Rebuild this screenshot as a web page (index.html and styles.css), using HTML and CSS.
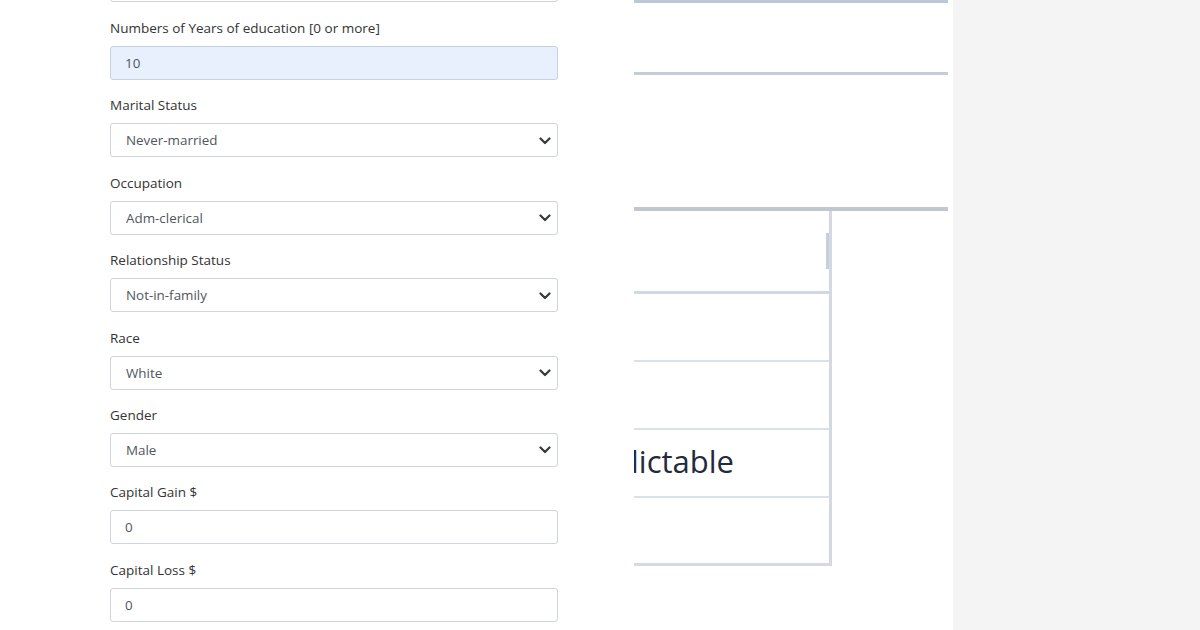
FILE: index.html
```html
<!DOCTYPE html>
<html lang="en">
<head>
<meta charset="utf-8">
<title>Income prediction form</title>
<link rel="stylesheet" href="styles.css">
</head>
<body>
<div class="page">
  <div class="form-col">
    <div class="form">
      <div class="control partial"></div>

      <div class="field">
        <label class="label">Numbers of Years of education [0 or more]</label>
        <div class="control filled">10</div>
      </div>

      <div class="field">
        <label class="label">Marital Status</label>
        <div class="control select"><span>Never-married</span>
          <svg class="chev" width="12" height="8" viewBox="0 0 12 8"><path d="M1.5 1.5 L6 6 L10.5 1.5" fill="none" stroke="#343a40" stroke-width="2.2" stroke-linecap="round" stroke-linejoin="round"/></svg>
        </div>
      </div>

      <div class="field">
        <label class="label">Occupation</label>
        <div class="control select"><span>Adm-clerical</span>
          <svg class="chev" width="12" height="8" viewBox="0 0 12 8"><path d="M1.5 1.5 L6 6 L10.5 1.5" fill="none" stroke="#343a40" stroke-width="2.2" stroke-linecap="round" stroke-linejoin="round"/></svg>
        </div>
      </div>

      <div class="field">
        <label class="label">Relationship Status</label>
        <div class="control select"><span>Not-in-family</span>
          <svg class="chev" width="12" height="8" viewBox="0 0 12 8"><path d="M1.5 1.5 L6 6 L10.5 1.5" fill="none" stroke="#343a40" stroke-width="2.2" stroke-linecap="round" stroke-linejoin="round"/></svg>
        </div>
      </div>

      <div class="field">
        <label class="label">Race</label>
        <div class="control select"><span>White</span>
          <svg class="chev" width="12" height="8" viewBox="0 0 12 8"><path d="M1.5 1.5 L6 6 L10.5 1.5" fill="none" stroke="#343a40" stroke-width="2.2" stroke-linecap="round" stroke-linejoin="round"/></svg>
        </div>
      </div>

      <div class="field">
        <label class="label">Gender</label>
        <div class="control select"><span>Male</span>
          <svg class="chev" width="12" height="8" viewBox="0 0 12 8"><path d="M1.5 1.5 L6 6 L10.5 1.5" fill="none" stroke="#343a40" stroke-width="2.2" stroke-linecap="round" stroke-linejoin="round"/></svg>
        </div>
      </div>

      <div class="field">
        <label class="label">Capital Gain $</label>
        <div class="control">0</div>
      </div>

      <div class="field">
        <label class="label">Capital Loss $</label>
        <div class="control">0</div>
      </div>
    </div>
  </div>

  <div class="panel">
    <div class="panel-inner">
      <div class="bar-top"></div>
      <div class="block-two"></div>
      <div class="block-three"></div>
      <div class="table">
        <div class="row row-first"><div class="thumb"></div></div>
        <div class="row"></div>
        <div class="row"></div>
        <div class="row row-text"><span class="cell-text">Unpredictable</span></div>
        <div class="row row-last"></div>
      </div>
    </div>
  </div>

  <div class="side"></div>
</div>
</body>
</html>
```

FILE: styles.css
```css
* { box-sizing: border-box; }

html, body {
  margin: 0;
  padding: 0;
  height: 630px;
  overflow: hidden;
  background: #ffffff;
}

.page {
  display: flex;
  height: 630px;
  font-family: "Open Sans", "Noto Sans", sans-serif;
}

.form-col {
  width: 634px;
  flex: none;
  padding-left: 110px;
  background: #ffffff;
}

.form {
  width: 448px;
  display: flex;
  flex-direction: column;
}

.control {
  height: 34px;
  border: 1px solid #ced4da;
  border-radius: 3px;
  background: #ffffff;
  color: #4f565d;
  font-size: 13.4px;
  padding: 0 14px;
  display: flex;
  align-items: center;
}

.partial {
  margin-top: -32px;
  margin-bottom: 15px;
}

.field {
  display: flex;
  flex-direction: column;
  margin-bottom: 14.4px;
}

.label {
  display: block;
  font-size: 13.5px;
  line-height: 21px;
  color: #333333;
  margin-bottom: 8px;
  padding-top: 1px;
  height: 21px;
}

.filled {
  background: #e8f0fe;
  border-color: #c9d1dc;
}

.select {
  justify-content: space-between;
  padding-right: 6px;
  padding-left: 15px;
}

.chev {
  display: block;
  margin-top: 1px;
}

.panel {
  width: 319px;
  flex: none;
  background: #ffffff;
  overflow: hidden;
}

.panel-inner {
  width: 314px;
}

.bar-top {
  height: 3px;
  background: #bcc8d7;
}

.block-two {
  height: 72px;
  border-bottom: 3px solid #c3ceda;
}

.block-three {
  height: 136px;
  border-bottom: 4px solid #c2c7cf;
}

.table {
  position: relative;
  width: 198px;
  border-right: 3px solid #d2d9e2;
}

.row {
  height: 68px;
  border-bottom: 2px solid #dbe1e8;
  display: flex;
  align-items: center;
  justify-content: flex-end;
  white-space: nowrap;
}

.row-first {
  height: 83px;
  border-bottom: 3px solid #d0d8e2;
  position: relative;
}

.row-last {
  height: 68px;
  border-bottom: 3px solid #d4dae2;
}

.thumb {
  position: absolute;
  right: 0;
  top: 22px;
  width: 3px;
  height: 36px;
  background: #c9cfd8;
}

.row-text {
  padding-right: 95px;
}

.cell-text {
  font-family: "Open Sans", "Noto Sans", sans-serif;
  font-size: 31px;
  color: #222a3b;
  line-height: 1;
  flex: none;
  margin-top: -3px;
}

.side {
  flex: 1;
  background: #f4f4f4;
}
```
